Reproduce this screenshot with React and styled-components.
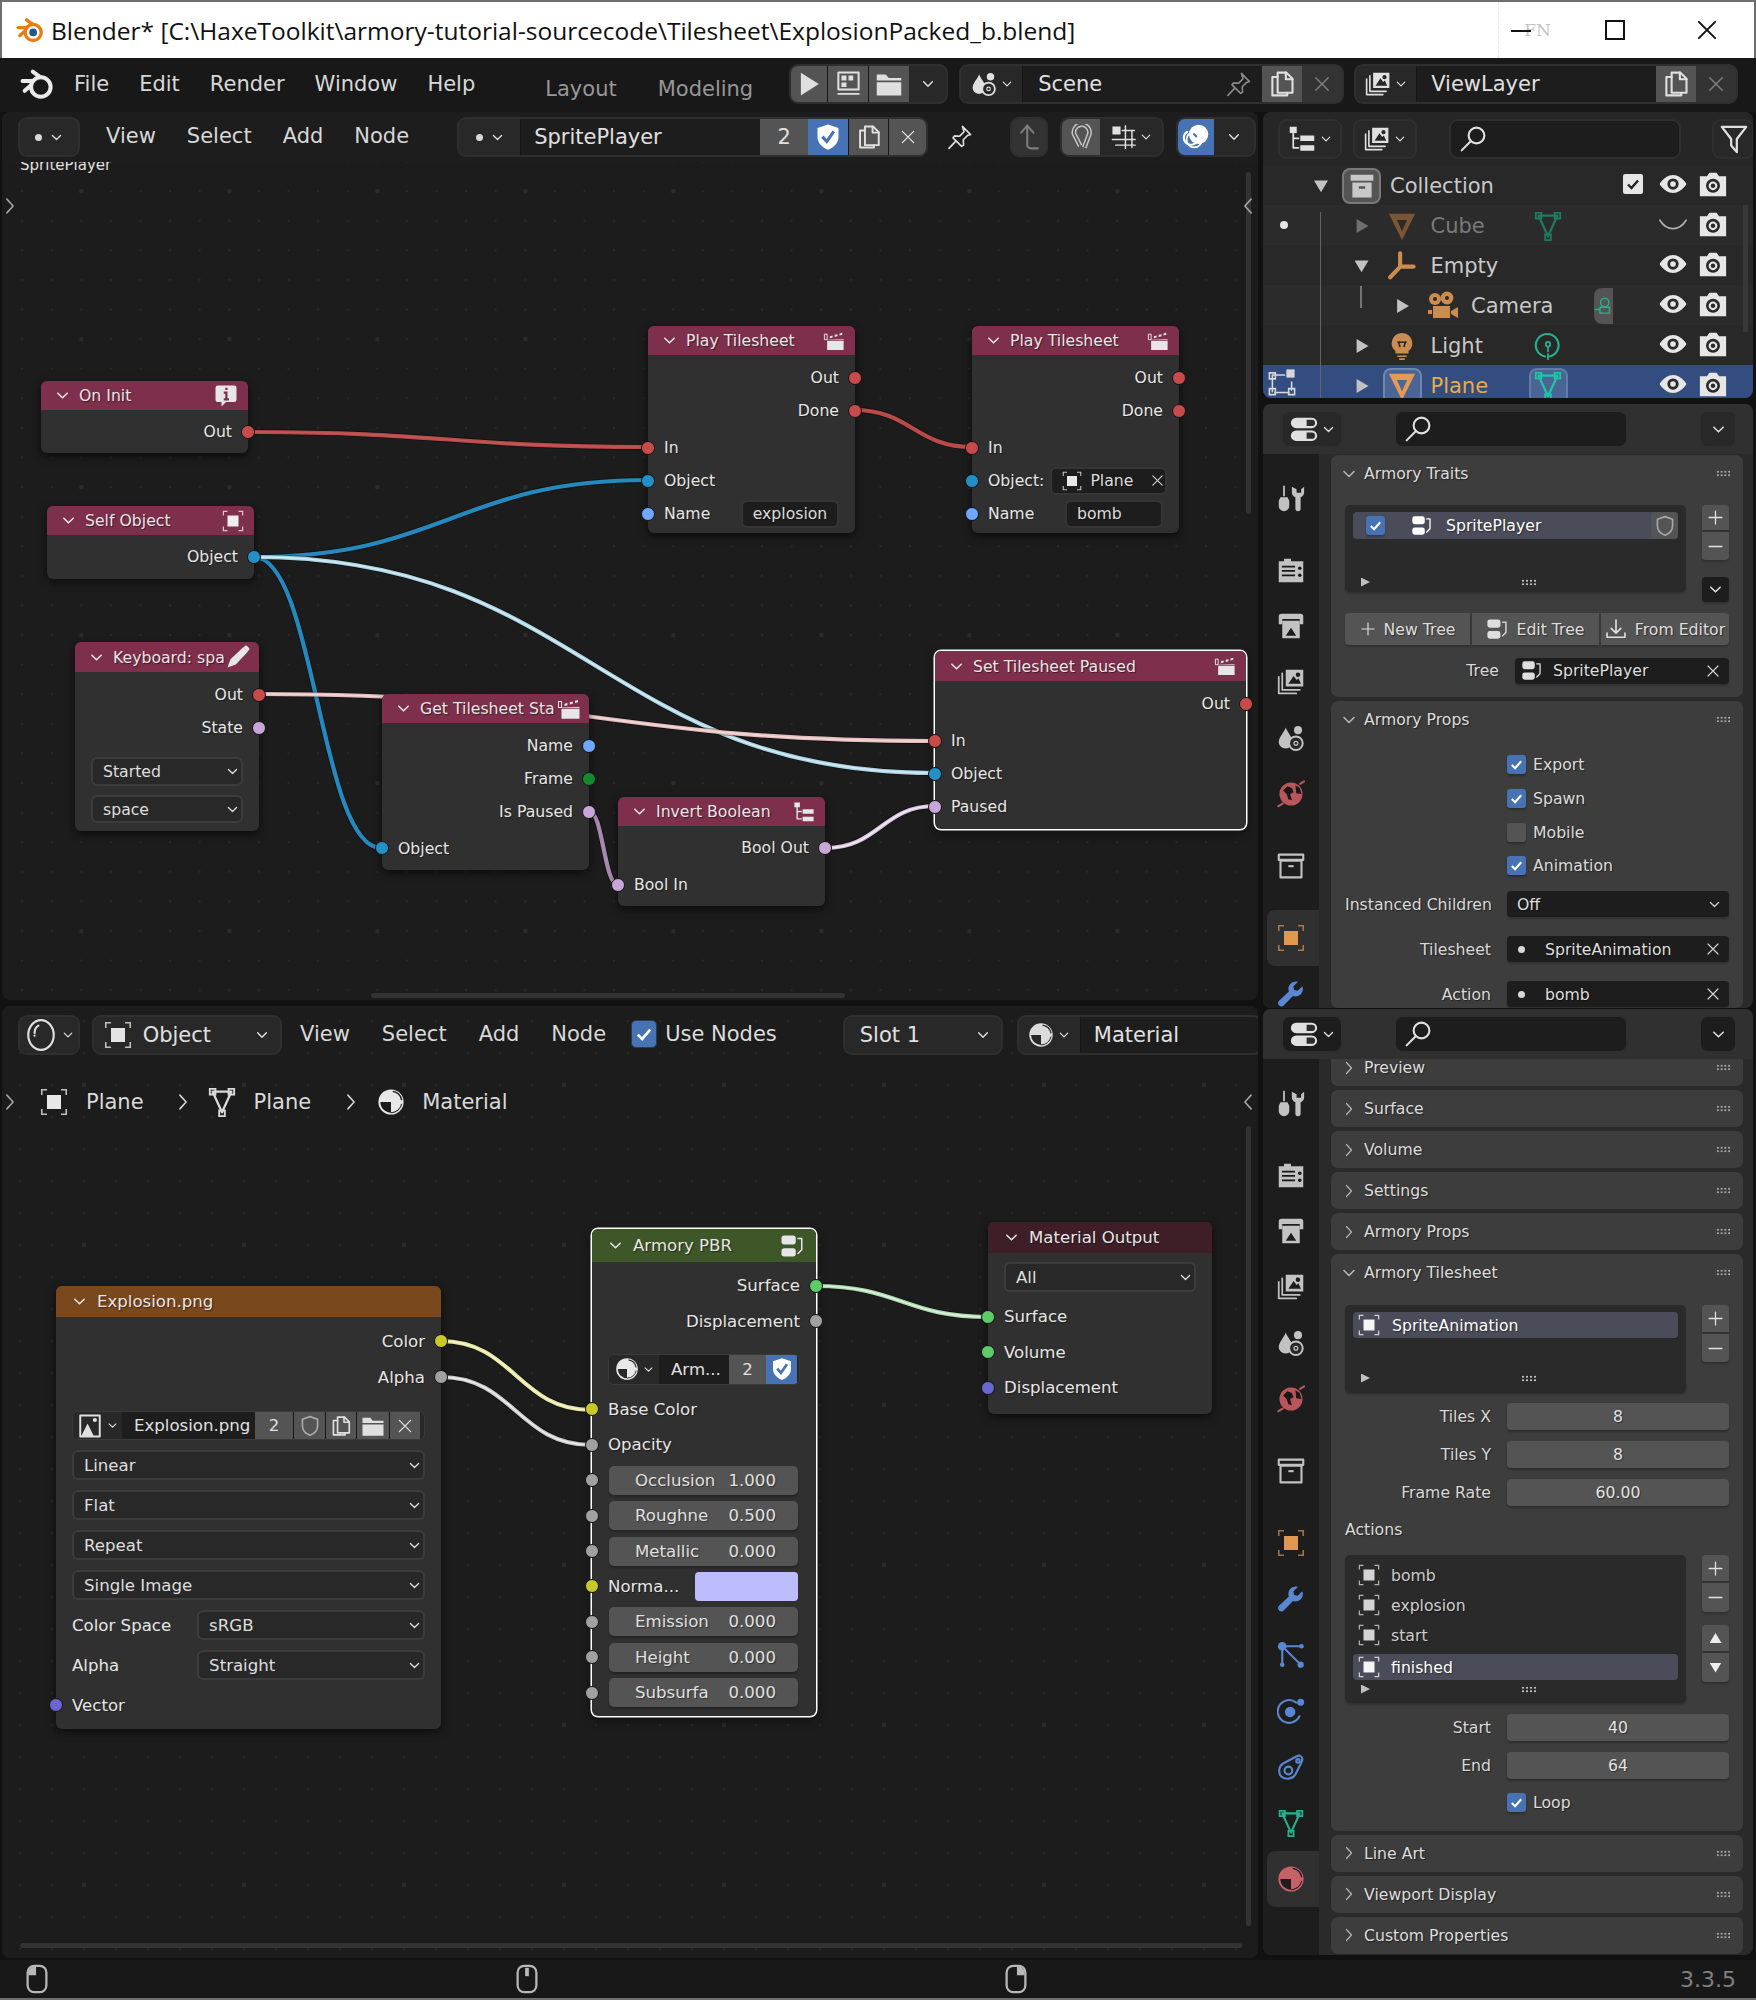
import React from 'react';
import styled, { createGlobalStyle } from 'styled-components';

const GlobalStyle = createGlobalStyle`
  html, body { margin: 0; padding: 0; background: #141414; }
  * { box-sizing: border-box; }
  #root { width: 1756px; height: 2000px; font-family: "DejaVu Sans", "Liberation Sans", sans-serif; }
`;

/* ---------- icons ---------- */

const Svg = ({ s = 20, c = 'currentColor', children, vb = 16, op }) => (
  <svg width={s} height={s} viewBox={`0 0 ${vb} ${vb}`} fill={c} stroke="none" color={c} opacity={op}>
    {children}
  </svg>
);
const line = { fill: 'none', stroke: 'currentColor', strokeWidth: 1.2, strokeLinecap: 'round', strokeLinejoin: 'round' };

const BlenderLogo = ({ s, c = '#e87d0d', eye = '#265787', ring = '#fff' }) => (
  <svg width={s} height={s} viewBox="0 0 16 16">
    <path d="M1.2 6.6h6M2.2 11.2l5-4.4M6 2.2l4.2 3" fill="none" stroke={c} strokeWidth="1.9" strokeLinecap="round" />
    <circle cx="9.8" cy="9.4" r="4.6" fill={ring} stroke={c} strokeWidth="1.9" />
    <circle cx="9.8" cy="9.4" r="2.2" fill={eye} />
  </svg>
);
const Play = p => <Svg {...p}><path d="M3 1l11 7-11 7z" /></Svg>;
const Screen = p => (
  <Svg {...p}>
    <path d="M2 1.5h12v10H2z" {...line} />
    <path d="M3.8 3.2h3v3h-3zM8 3.2h2.8v3H8zM3.8 7.4h3v2.6h-3z" />
    <path d="M1.5 13.6h13v1h-13z" />
  </Svg>
);
const Folder = p => <Svg {...p}><path d="M1 2.5h5.2L7.8 4.5H15V6H1zM1 7h14v7.5H1z" /></Svg>;
const Chevron = ({ s = 14, c }) => <Svg s={s} c={c}><path d="M3 5.5l5 5 5-5" {...line} strokeWidth="1.6" /></Svg>;
const ChevronR = ({ s = 14, c }) => <Svg s={s} c={c}><path d="M5.5 2.5l5 5.5-5 5.5" {...line} /></Svg>;
const ChevronL = ({ s = 14, c }) => <Svg s={s} c={c}><path d="M10.5 2.5l-5 5.5 5 5.5" {...line} /></Svg>;
const SceneIc = p => (
  <Svg {...p}>
    <path d="M5 2c1 3 4 5.500 4 8.300 0 2-1.700 3.700-4 3.700s-4-1.700-4-3.700C1 7.500 4 5 5 2z" />
    <circle cx="12" cy="3.500" r="2.300" />
    <circle cx="10.800" cy="11" r="3.900" fill="#282828" stroke="currentColor" strokeWidth="1.100" />
    <circle cx="10.800" cy="11" r="1.100" fill="none" stroke="currentColor" strokeWidth=".7" />
  </Svg>
);
const ViewLayerIc = p => (
  <Svg {...p}>
    <path d="M5 1h10v9.500H5zM6.500 9l3-4.500 1.700 2.300 1-1 1.500 3.200zM12 2.500a1.300 1.300 0 100 2.600 1.300 1.300 0 000-2.600z" fillRule="evenodd" />
    <path d="M3 3v9.500h10M1 5v9.500h10" {...line} strokeWidth="1" />
  </Svg>
);
const Copy = p => (
  <Svg {...p}>
    <path d="M5.500 1.500h5L14 5v8H5.500z" {...line} />
    <path d="M10.200 1.500V5.300H14" {...line} />
    <path d="M5.500 4H2.500v10.500h8.500V13" {...line} />
  </Svg>
);
const Close = p => <Svg {...p}><path d="M3 3l10 10M13 3L3 13" {...line} /></Svg>;
const Pin = p => (
  <Svg {...p}>
    <path d="M9.500 1.500l5 5-1.800.5-2.700 2.700.2 3.300-1.200.8-5.300-5.300.9-1.200 3.200.2 2.700-2.700zM5 11l-3.800 4" {...line} strokeWidth="1" />
  </Svg>
);
const Shield = ({ s, c = '#ddd', check, op }) => (
  <Svg s={s} c={c} op={op}>
    {check ? (
      <>
        <path d="M8 .8l6 2V8c0 3.800-3.300 6.300-6 7.300C5.300 14.300 2 11.800 2 8V2.800z" />
        <path d="M4.800 7.800L7.300 10.600 11.300 4.800" fill="none" stroke="#4772b3" strokeWidth="1.800" />
      </>
    ) : (
      <path d="M8 1.200l5.500 1.900V8c0 3.500-3 5.800-5.500 6.800C5.500 13.800 2.500 11.500 2.500 8V3.100z" {...line} />
    )}
  </Svg>
);
const Parent = p => <Svg {...p}><path d="M3.500 5.500L7 1.500l3.500 4M7 1.500V12.500a2 2 0 002 2h4" {...line} /></Svg>;
const Magnet = p => (
  <Svg {...p}>
    <path d="M10 14.500l2.600-7A4.800 4.800 0 103.700 6l3.800 7.500" fill="none" stroke="currentColor" strokeWidth="3" />
    <path d="M10 14.500l2.600-7A4.800 4.800 0 103.700 6l3.800 7.500" fill="none" stroke="#545454" strokeWidth="1.100" />
  </Svg>
);
const SnapGrid = p => (
  <Svg {...p}>
    <path d="M1.500 1.500h5v5h-5z" />
    <path d="M9.500 1v14M1.500 9.500h14M13.500 4.500v10M3.500 13h12M7.500 4h7.500" {...line} strokeWidth=".9" />
  </Svg>
);
const Overlay = p => (
  <Svg {...p}>
    <circle cx="9.500" cy="6.500" r="5.500" />
    <path d="M9 9a4 4 0 11-6-4" {...line} strokeWidth="1.200" />
    <path d="M6.500 6l2 2" stroke="#4772b3" strokeWidth="1.200" />
    <circle cx="7" cy="9.500" r="4.400" fill="none" stroke="currentColor" strokeWidth="1" />
  </Svg>
);
const TreeIc = p => (
  <Svg {...p}>
    <path d="M1 1h4v3.500H1zM7 6h8v3.200H7zM7 11.500h8v3.200H7z" />
    <path d="M3 4.500v8.500h3M3 7.600h3" {...line} strokeWidth="1" />
  </Svg>
);
const Funnel = p => <Svg {...p}><path d="M1.500 1.500h13l-5 6.500v7l-3-3.500V8z" {...line} /></Svg>;
const Search = p => (
  <Svg {...p}>
    <circle cx="10" cy="6" r="4.500" {...line} />
    <path d="M6.700 9.300L1.500 14.500" {...line} />
  </Svg>
);
const PropsIc = p => (
  <Svg {...p}>
    <path d="M3.500 1.500h9a3 3 0 010 6h-9a3 3 0 010-6zM3.500 8.800h9a3 3 0 010 6h-9a3 3 0 010-6z" />
    <path d="M9.500 2.700h3a1.800 1.800 0 010 3.600h-3zM9.500 10h3a1.800 1.800 0 010 3.600h-3z" fill="#2c2c2c" />
  </Svg>
);
const Tool = p => (
  <Svg {...p}>
    <path d="M3.500 1h1v6h-1zM1 9.500l1-2h4l1 2v3a2.500 2.500 0 01-6 0z" />
    <path d="M8.500 1.500v3.200A3.200 3.200 0 0010.500 7.600V14a1.500 1.500 0 003 0V7.600a3.200 3.200 0 002-2.900V1.500L13.800 3v2h-2.600V3z" />
  </Svg>
);
const RenderIc = p => (
  <Svg {...p}>
    <path d="M4 1.500h4v1.500h7v12H1V3h3z" />
    <path d="M2.800 5.500h7.500v1H2.800zM2.800 8h7.500v1H2.800zM2.800 10.500h7.500v1H2.800z" fill="#181818" />
    <circle cx="13" cy="7" r="1" fill="#181818" />
    <circle cx="13" cy="11" r="1" fill="#181818" />
  </Svg>
);
const OutputIc = p => (
  <Svg {...p}>
    <path d="M2.500 1h11A1.500 1.500 0 0115 2.500V7h-2V4H3v3H1V2.500A1.500 1.500 0 012.500 1z" />
    <path d="M3 5h10v10H3zM5 13.500h6L8 9z" fillRule="evenodd" />
  </Svg>
);
const World = p => (
  <Svg {...p}>
    <circle cx="8" cy="8" r="6.600" />
    <path d="M3.500 6l2.500-2.500 2.500 1 1 2.500-2 1 1 3.500-2-.5-1-3zM10.500 3l2.500 1.500 1 3.500-3-.5z" fill="#181818" />
    <path d="M13.200 2.200L15.500 .8M.8 15l2.400-1.500" {...line} />
  </Svg>
);
const CollectionIc = p => (
  <Svg {...p}>
    <path d="M1 1.500h14v3H1zM2 5h12v9.500H2z" {...line} />
    <path d="M6.500 7.500h3v1.200h-3z" />
  </Svg>
);
const CollectionSolid = p => (
  <Svg {...p}>
    <path d="M1.500 1.500h13v3.500h-13zM2.500 6h11v8.500h-11zM6.200 8.200v1.300h3.600V8.200z" fillRule="evenodd" />
  </Svg>
);
const ObjectIc = ({ s, c, inner, corner }) => (
  <Svg s={s} c={c}>
    <path d="M1 4V1h3M12 1h3v3M15 12v3h-3M4 15H1v-3" fill="none" stroke={corner || c || 'currentColor'} strokeWidth=".9" opacity=".8" />
    <path d="M4 4h8v8H4z" fill={inner || c || 'currentColor'} />
  </Svg>
);
const Wrench = p => (
  <Svg {...p}>
    <path d="M14.500 3.500L11.800 6.200 9.800 5.700 9.300 3.700 12 1C9.300.3 6.700 2 6.500 4.800c0 .7.100 1.300.3 1.800L1.300 11.700c-1 1-.9 2-.1 2.800.8.800 1.900.8 2.800-.1l5.100-5.200c3.300 1 6.800-2.200 5.400-5.700z" />
  </Svg>
);
const Particles = p => (
  <Svg {...p}>
    <circle cx="3" cy="3" r="2.500" />
    <circle cx="14" cy="3" r="1.300" />
    <circle cx="13.500" cy="13.500" r="1.800" />
    <circle cx="3" cy="13.500" r="1.300" />
    <path d="M5 3h8M3 5v7M5 5l7.500 7.500" {...line} />
  </Svg>
);
const Physics = p => (
  <Svg {...p}>
    <circle cx="7.500" cy="8.500" r="3" />
    <circle cx="13.500" cy="3" r="2" />
    <path d="M11 3.200A6.500 6.500 0 1012.800 11" {...line} />
  </Svg>
);
const Constraint = p => (
  <Svg {...p}>
    <path d="M13 1.500c1.500.5 1.800 2.200 1 3.800l-3.500 7C9 15 5 15.500 2.500 13.500.5 11.500 1 7.500 3.500 6L11 2c.8-.4 1.400-.6 2-.5z" {...line} />
    <circle cx="6.500" cy="10" r="2.200" {...line} />
    <circle cx="12" cy="4.500" r="1" {...line} />
  </Svg>
);
const Mesh = ({ s, c, op }) => (
  <Svg s={s} c={c} op={op}>
    <path d="M3 2.500h10M3 2.500L8 13.500M13 2.500L8 13.500" {...line} />
    <path d="M1.500 1h3v3h-3zM11.500 1h3v3h-3zM6.500 12.500h3v3h-3z" fill="none" stroke="currentColor" strokeWidth="1" />
  </Svg>
);
const MaterialIc = ({ s, c = 'currentColor', dark = '#1d1d1d' }) => (
  <svg width={s} height={s} viewBox="0 0 16 16">
    <circle cx="8" cy="8" r="7.200" fill={c} />
    <path d="M8 8H1.900A6.100 6.100 0 008 14.100z" fill={dark} />
    <path d="M9 1.900A6.200 6.200 0 0114.100 7" fill="none" stroke={dark} strokeWidth=".8" />
    <path d="M8 14.100A6.100 6.100 0 0014.100 9" fill="none" stroke={dark} strokeWidth=".6" />
  </svg>
);
const SphereIc = ({ s }) => (
  <Svg s={s}>
    <ellipse cx="8" cy="8" rx="6" ry="7" {...line} strokeWidth="1" />
    <path d="M5 7c0-1.500.6-2.700 1.800-3.400" {...line} strokeWidth="1" />
    <circle cx="5" cy="8.300" r=".5" />
  </Svg>
);
const Clapper = p => (
  <Svg {...p}>
    <path d="M3 8h12v6.500H3z" />
    <path d="M3 7l12-.3v.8H3z" />
    <path d="M1 3h2v4H1z" fill="none" stroke="currentColor" strokeWidth=".7" />
    <path d="M5 4.500l2-.5v1.500l-2 .5zM8.500 3.500l2-.5v1.500l-2 .5zM12 2.500l2-.5v1.500l-2 .5z" />
  </Svg>
);
const Info = p => (
  <Svg {...p}>
    <path d="M2.500 1h11A1.500 1.500 0 0115 2.500v8a1.500 1.500 0 01-1.500 1.500H8l-3 3v-3H2.500A1.500 1.500 0 011 10.500v-8A1.500 1.500 0 012.500 1z" />
    <path d="M6.500 5h2.500v4.500h1V11H6.500V9.500h1v-3h-1zM7.500 2.500h1.500V4H7.500z" fill="#7e2f4c" />
  </Svg>
);
const Pencil = p => <Svg {...p}><path d="M11.500 1.500l3 3L6.500 13 1 15l2-5.500zM12.500 .8a1.200 1.200 0 011.700 0l1 1a1.200 1.200 0 010 1.700l-.8.800-2.800-2.800z" /></Svg>;
const NodeTreeIc = p => (
  <Svg {...p}>
    <rect x="1" y="1" width="9.500" height="6" rx="1.800" />
    <rect x="1" y="9.500" width="9.500" height="5.500" rx="1.800" />
    <path d="M12 3h2.500v7.500L12 13" {...line} strokeWidth="1" />
  </Svg>
);
const ImageIc = p => (
  <Svg {...p}>
    <path d="M2 1.500h12v13H2z" {...line} />
    <path d="M2.500 14.500l4-8 4 8zM11 3a1.300 1.300 0 100 2.600A1.300 1.300 0 0011 3z" />
  </Svg>
);
const Download = p => <Svg {...p}><path d="M8 1.500V10.500M4.500 7.500L8 11l3.500-3.500M1.500 11v3h13v-3" {...line} /></Svg>;
const Plus = p => <Svg {...p}><path d="M8 2v12M2 8h12" {...line} /></Svg>;
const Minus = p => <Svg {...p}><path d="M2 8h12" {...line} /></Svg>;
const Eye = ({ s = 30 }) => (
  <Svg s={s}>
    <path d="M.8 8C3 4.700 5.500 3.200 8 3.200s5 1.500 7.200 4.800C13 11.300 10.500 12.800 8 12.800S3 11.300.8 8z" />
    <circle cx="8" cy="8" r="3" fill="#2a2a2a" />
    <circle cx="8" cy="8" r="1.500" />
  </Svg>
);
const EyeOff = ({ s = 30 }) => <Svg s={s} op=".7"><path d="M1 6c2 3.200 4.500 4.500 7 4.500S13 9.200 15 6" {...line} strokeWidth=".9" /></Svg>;
const CameraEye = ({ s = 28 }) => (
  <Svg s={s}>
    <path d="M.5 3.500h4L6 1.500h4l1.500 2h4V15H.5z" />
    <circle cx="8" cy="9" r="4" fill="#2a2a2a" />
    <circle cx="8" cy="9" r="2.500" />
    <circle cx="8" cy="9" r="1.300" fill="#2a2a2a" />
  </Svg>
);
const Triangle = ({ c, s }) => (
  <Svg s={s} c={c}>
    <path d="M1 1.500h14L8 15.500zM5.300 4.800L8 10.800l2.700-6z" fillRule="evenodd" />
  </Svg>
);
const EmptyIc = ({ c, s }) => (
  <Svg s={s} c={c}>
    <path d="M7 1.200v7.300M7.200 8.300h7M7 8.500l-5.300 5.500" fill="none" stroke="currentColor" strokeWidth="2.200" strokeLinecap="round" />
  </Svg>
);
const CameraObj = ({ c, s }) => (
  <Svg s={s} c={c}>
    <circle cx="4" cy="4.500" r="3" />
    <circle cx="10" cy="4" r="3.200" />
    <circle cx="4" cy="4.500" r="1" fill="#2a2a2a" />
    <circle cx="10" cy="4" r="1" fill="#2a2a2a" />
    <path d="M3 8h8.500v6H3zM12 10.500l3.500-2v5.500l-3.500-2zM.5 10h2v2h-2z" />
  </Svg>
);
const Bulb = ({ c, s }) => (
  <Svg s={s} c={c}>
    <path d="M8 1a5.500 5.500 0 013.500 9.700V12h-7v-1.300A5.500 5.500 0 018 1z" />
    <path d="M5.500 13h5v.9h-5zM6.500 14.500h3v.9h-3z" />
    <path d="M6 5.500l1 3M10 5.500l-1 3M5.500 6h5" stroke="#2a2a2a" strokeWidth=".9" fill="none" />
  </Svg>
);
const LightData = ({ c, s }) => (
  <Svg s={s} c={c}>
    <path d="M6.300 14A6.500 6.500 0 118.800 14" {...line} />
    <circle cx="8" cy="7" r="1.300" {...line} strokeWidth="1" />
    <path d="M8 8.500v2.500M8 12.500v3" {...line} strokeWidth="1" />
  </Svg>
);
const CamData = ({ c, s }) => (
  <Svg s={s} c={c}>
    <circle cx="9" cy="5" r="3.500" {...line} />
    <path d="M5 9h8v5H5zM1 11h4" {...line} />
  </Svg>
);
const ModeIc = ({ s }) => (
  <Svg s={s}>
    <path d="M2.500 4.500v9M2.500 4h7M4 14h8M13.500 8v4.500" {...line} strokeWidth=".9" />
    <path d="M.8 2.800h3.400v3.400H.8zM.8 11.800h3.400v3.400H.8zM11.800 11.800h3.400v3.400h-3.400z" fill="none" stroke="currentColor" strokeWidth=".9" />
    <path d="M10.500 .8h4.700v4.700h-4.700z" />
  </Svg>
);
const MouseIc = ({ s, side }) => (
  <Svg s={s}>
    <rect x="3" y="1" width="10" height="14" rx="3.500" {...line} />
    {side === 'l' && <path d="M3.500 4.500a3 3 0 013-3h1V6H3.500z" />}
    {side === 'm' && <rect x="7" y="2" width="2" height="4.500" />}
    {side === 'r' && <path d="M12.500 4.500a3 3 0 00-3-3h-1V6h4z" />}
  </Svg>
);
const Check = ({ s = 16 }) => <Svg s={s} c="#fff"><path d="M3 8.500L6.500 12 13 4.500" fill="none" stroke="#fff" strokeWidth="2.200" /></Svg>;

/* ---------- window frame ---------- */

const Window = styled.div`
  width: 1756px;
  height: 2000px;
  display: flex;
  flex-direction: column;
  background: #111;
  overflow: hidden;
  position: relative;
`;

const TitleBar = styled.div`
  height: 58px;
  flex: none;
  background: #fff;
  border-top: 2px solid #6f6f6f;
  border-left: 2px solid #6f6f6f;
  border-right: 2px solid #6f6f6f;
  display: flex;
  align-items: center;
  padding-left: 14px;
  gap: 7px;
  color: #111;
  font-family: "Open Sans", "Liberation Sans", sans-serif;
  font-size: 24.500px;
  white-space: nowrap;
`;

const ImeBadge = styled.div`
  margin-left: auto;
  width: 100px;
  height: 56px;
  padding-right: 22px;
  color: #c4c4c4;
  font-family: "DejaVu Serif", serif;
  font-size: 17px;
  display: flex;
  align-items: center;
  justify-content: center;
  border-left: 1px dashed #e8e8e8;
  position: relative;
`;

const WinMin = styled.span`
  position: absolute;
  left: 12px;
  top: 28px;
  width: 20px;
  height: 2px;
  background: #111;
`;

const WinMax = styled.span`
  width: 20px;
  height: 20px;
  border: 2px solid #111;
`;

const WinClose = styled.span`
  margin-left: 62px;
  margin-right: 34px;
  display: flex;
  color: #111;
`;

const TopBar = styled.div`
  height: 54px;
  flex: none;
  background: #181818;
  display: flex;
  align-items: center;
  padding-bottom: 3px;
  color: #dcdcdc;
`;

const LogoBox = styled.span`
  margin-left: 20px;
  display: flex;
`;

const Menus = styled.div`
  display: flex;
  flex: none;
  gap: ${p => p.$gap || 30}px;
  margin-left: ${p => p.$ml || 0}px;
  font-size: 21px;
  line-height: 38px;
  color: ${p => p.$c || '#d8d8d8'};
  white-space: nowrap;
`;

const Workspaces = styled.div`
  display: flex;
  gap: 41px;
  margin-left: 70px;
  padding-top: 10px;
  font-size: 21px;
  color: #979797;
`;

const Group = styled.div`
  display: flex;
  align-items: stretch;
  height: ${p => p.$h || 40}px;
  margin-left: ${p => p.$ml || 0}px;
  border: 2px solid #2f2f2f;
  border-radius: 9px;
  overflow: hidden;
  flex: none;
  background: #282828;
`;

const tones = {
  icon: '#282828',
  dark: '#1d1d1d',
  mid: '#545454',
  blue: '#4772b3',
  dim: '#333333',
  none: 'transparent',
};

const Btn = styled.div`
  width: ${p => p.$w}px;
  flex: none;
  background: ${p => tones[p.$tone || 'icon']};
  color: ${p => p.$c || '#e0e0e0'};
  display: flex;
  align-items: center;
  justify-content: ${p => (p.$left ? 'flex-start' : 'center')};
  gap: 4px;
  padding-left: ${p => p.$left || 0}px;
  font-size: ${p => p.$fs || 21}px;
  border-left: ${p => (p.$sep ? '1px solid #161616' : 'none')};
  white-space: nowrap;
  overflow: hidden;
`;

const PinSlot = styled.div`
  width: 48px;
  height: 40px;
  flex: none;
  margin-left: 8px;
  display: flex;
  align-items: center;
  justify-content: center;
  color: #e0e0e0;
`;

const Filler = styled.span`
  flex: 1;
`;

const Dot = styled.span`
  width: 7px;
  height: 7px;
  border-radius: 50%;
  background: #d8d8d8;
  margin-right: 4px;
  flex: none;
`;

const Main = styled.div`
  flex: 1;
  display: grid;
  grid-template-columns: 1256px 490px;
  column-gap: 5px;
  padding-left: 2px;
  min-height: 0;
`;

const Column = styled.div`
  display: flex;
  flex-direction: column;
  min-height: 0;
`;

/* ---------- node editor ---------- */

const Editor = styled.div`
  height: ${p => p.$h}px;
  margin-top: ${p => p.$mt || 0}px;
  flex: none;
  position: relative;
  overflow: hidden;
  border-radius: 8px;
  background-color: #1c1c1c;
  background-image:
    radial-gradient(circle, #2c2c2c 2px, transparent 2.500px),
    radial-gradient(circle, #282828 1px, transparent 1.500px);
  background-size: ${p => p.$grid * 5}px ${p => p.$grid * 5}px, ${p => p.$grid}px ${p => p.$grid}px;
  background-position: ${p => p.$gx}px ${p => p.$gy}px, ${p => p.$gx}px ${p => p.$gy}px;
`;

const Canvas = styled.div`
  position: absolute;
  left: ${p => -p.$ox}px;
  top: ${p => -p.$oy}px;
  width: 1756px;
  height: 2000px;
`;

const LinkLayer = styled.svg`
  position: absolute;
  left: 0;
  top: 0;
  width: 1756px;
  height: 2000px;
`;

const EditorHeader = styled.div`
  position: relative;
  z-index: 2;
  height: ${p => p.$h}px;
  background: ${p => p.$bg || '#1d1d1d'};
  display: flex;
  align-items: flex-start;
  padding-top: ${p => p.$pt}px;
  padding-left: 16px;
`;

const HeaderLabel = styled.span`
  flex: none;
  font-size: 21px;
  color: #dcdcdc;
  margin-left: 8px;
  line-height: 38px;
  white-space: nowrap;
`;

const BigCheck = styled.span`
  width: 26px;
  height: 28px;
  flex: none;
  margin-left: ${p => p.$ml}px;
  margin-top: 5px;
  border-radius: 5px;
  background: #4772b3;
  border: 1px solid #2f3b52;
  display: flex;
  align-items: center;
  justify-content: center;
`;

const Crumbs = styled.div`
  position: relative;
  z-index: 1;
  margin-top: 20px;
  height: 44px;
  padding-left: 38px;
  display: flex;
  align-items: center;
  font-size: 21px;
  color: #dadada;
`;

const CrumbIcon = styled.span`
  display: flex;
  margin-left: ${p => p.$ml || 0}px;
`;

const CrumbText = styled.span`
  margin-left: ${p => p.$ml || 17}px;
`;

const StrayLabel = styled.div`
  position: absolute;
  left: 20px;
  top: 156px;
  font-size: 15px;
  color: #e0e0e0;
`;

const RegionToggle = styled.span`
  position: absolute;
  z-index: 4;
  top: ${p => p.$top}px;
  ${p => (p.$right ? 'right: 0;' : 'left: -2px;')}
  color: #a8a8a8;
  display: flex;
`;

const Scroller = styled.span`
  position: absolute;
  z-index: 3;
  left: ${p => p.$x}px;
  top: ${p => p.$y}px;
  width: ${p => p.$w}px;
  height: ${p => p.$h}px;
  border-radius: 3px;
  background: #333;
`;

const Node = styled.div`
  position: absolute;
  left: ${p => p.$x}px;
  top: ${p => p.$y}px;
  width: ${p => p.$w}px;
  background: #303030;
  border-radius: 6px;
  color: #e6e6e6;
  font-size: ${p => p.$fs || 15.700}px;
  box-shadow: ${p => (p.$sel ? '0 0 0 1.500px #fff, 0 4px 10px rgba(0,0,0,.5)' : '0 3px 9px rgba(0,0,0,.6)')};
  padding-bottom: ${p => p.$pb || 0}px;
`;

const NodeHead = styled.div`
  height: ${p => p.$h || 29}px;
  background: ${p => p.$bg || '#7e2f4c'};
  border-radius: 6px 6px 0 0;
  display: flex;
  align-items: center;
  padding-left: ${p => p.$pl || 14}px;
  gap: ${p => p.$gap || 9}px;
  margin-bottom: ${p => p.$mb || 0}px;
  white-space: nowrap;
  text-shadow: 1px 1px 1px rgba(0, 0, 0, 0.5);
  overflow: hidden;
`;

const HeadTitle = styled.span`
  flex: 1;
  min-width: 0;
`;

const HeadIcon = styled.span`
  display: flex;
  margin-right: ${p => (p.$mr !== undefined ? p.$mr : 10)}px;
  flex: none;
`;

const NodeRow = styled.div`
  position: relative;
  height: ${p => p.$h || 33}px;
  margin-top: ${p => p.$mt || 0}px;
  display: flex;
  align-items: center;
  justify-content: ${p => (p.$end ? 'flex-end' : 'flex-start')};
  padding: 0 16px;
  gap: 6px;
  white-space: nowrap;
  text-shadow: 1px 1px 1px rgba(0, 0, 0, 0.4);
`;

const Socket = styled.span`
  position: absolute;
  top: 50%;
  ${p => (p.$out ? 'right: -7px;' : 'left: -7px;')}
  width: 14px;
  height: 14px;
  margin-top: -7px;
  border-radius: 50%;
  background: ${p => p.$c};
  border: 1px solid #141414;
  z-index: 1;
`;

const NodeField = styled.span`
  margin-left: auto;
  width: ${p => p.$w}px;
  height: 28px;
  flex: none;
  background: #1d1d1d;
  border: 2px solid #363636;
  border-radius: 6px;
  display: flex;
  align-items: center;
  justify-content: ${p => (p.$center ? 'center' : 'flex-start')};
  padding-left: ${p => (p.$center ? 0 : 10)}px;
  gap: 8px;
  color: #dcdcdc;
`;

const NodeSelect = styled.div`
  height: ${p => p.$h || 30}px;
  margin: ${p => p.$mt || 0}px 16px 0 ${p => p.$ml || 16}px;
  background: #282828;
  border: 2px solid #3c3c3c;
  border-radius: 6px;
  display: flex;
  align-items: center;
  justify-content: space-between;
  padding: 0 2px 0 10px;
  color: #dedede;
  white-space: nowrap;
`;

const LabeledSelect = styled.div`
  margin-top: ${p => p.$mt || 10}px;
  display: grid;
  grid-template-columns: 125px 1fr;
  align-items: center;
  padding-left: 16px;
`;

const NodeId = styled.div`
  height: ${p => p.$h || 30}px;
  margin: ${p => p.$mt || 0}px 16px 0;
  border-radius: 6px;
  display: flex;
  overflow: hidden;
  border: 1px solid #3a3a3a;
  background: #282828;
`;

const NodeSlider = styled.div`
  width: 189px;
  height: 29px;
  background: #545454;
  border-radius: 5px;
  display: flex;
  align-items: center;
  justify-content: space-between;
  padding: 0 22px 0 26px;
  margin-left: 1px;
  color: #e0e0e0;
  white-space: nowrap;
  box-shadow: 0 2px 2px rgba(0, 0, 0, 0.25);
`;

const Swatch = styled.span`
  margin-left: auto;
  margin-right: 2px;
  width: 103px;
  height: 29px;
  background: #bcbcff;
  border-radius: 4px;
`;

/* ---------- right column ---------- */

const Outliner = styled.div`
  height: 286px;
  flex: none;
  background: #282828;
  border-radius: 8px;
  overflow: hidden;
  position: relative;
`;

const OutlinerHeader = styled.div`
  height: 53px;
  background: #262626;
  display: flex;
  align-items: center;
  padding-left: 15px;
`;

const OutRow = styled.div`
  height: 40px;
  display: flex;
  align-items: center;
  padding-left: ${p => 51 + p.$d * 40.500}px;
  padding-top: 2px;
  background: ${p => (p.$sel ? '#334d80' : p.$alt ? '#2b2b2b' : '#282828')};
  font-size: 21px;
  color: ${p => p.$c || '#c8c8c8'};
  white-space: nowrap;
`;

const OutArrow = styled.span`
  width: 14px;
  height: 14px;
  flex: none;
  background: ${p => p.$c || '#c2c2c2'};
  clip-path: ${p => (p.$open ? 'polygon(0 10%, 100% 10%, 50% 95%)' : 'polygon(15% 0, 100% 50%, 15% 100%)')};
`;

const OutIcon = styled.span`
  width: 39px;
  height: 36px;
  margin-left: 14px;
  flex: none;
  display: flex;
  align-items: center;
  justify-content: center;
  border-radius: 8px;
  ${p => p.$box && `background: ${p.$box}; border: 2px solid rgba(255,255,255,.22);`}
`;

const OutName = styled.span`
  margin-left: 9px;
  width: ${p => p.$w}px;
  flex: none;
`;

const DataCell = styled.span`
  width: ${p => p.$w || 39}px;
  height: 36px;
  flex: none;
  display: flex;
  justify-content: ${p => (p.$w ? 'flex-start' : 'center')};
  align-items: center;
  overflow: hidden;
  border-radius: ${p => (p.$w ? '8px 0 0 8px' : '8px')};
  ${p => p.$box && `background: ${p.$box};${p.$w ? '' : ' border: 2px solid rgba(255,255,255,.15);'}`}
`;

const RowEnd = styled.span`
  margin-left: auto;
  margin-right: 20px;
  margin-bottom: 5px;
  display: flex;
  align-items: center;
`;

const EndCell = styled.span`
  width: 40px;
  display: flex;
  justify-content: center;
  color: #e6e6e6;
`;

const TinyCheck = styled.span`
  width: 20px;
  height: 20px;
  border-radius: 2px;
  background: #e6e6e6;
  display: flex;
  align-items: center;
  justify-content: center;
`;

const OutMark = styled.span`
  position: absolute;
  left: ${p => p.$x}px;
  top: ${p => p.$y}px;
  ${p => p.$w && `width: ${p.$w}px;`}
  ${p => p.$h && `height: ${p.$h}px;`}
  ${p => p.$bg && `background: ${p.$bg};`}
  ${p => p.$r && 'border-radius: 50%;'}
  color: #d8d8d8;
  display: flex;
`;

const PropsArea = styled.div`
  height: ${p => p.$h}px;
  margin-top: ${p => p.$mt}px;
  flex: none;
  background: #2a2a2a;
  border-radius: 8px;
  overflow: hidden;
  display: flex;
  flex-direction: column;
  color: #d8d8d8;
  font-size: 15.700px;
  text-shadow: 1px 1px 1px rgba(0, 0, 0, 0.45);
`;

const PropsHeader = styled.div`
  height: ${p => p.$h || 50}px;
  flex: none;
  background: #303030;
  display: flex;
  align-items: center;
  padding-left: 18px;
  color: #e0e0e0;
`;

const PropsBody = styled.div`
  flex: 1;
  display: flex;
  min-height: 0;
`;

const NavBar = styled.div`
  width: 56px;
  flex: none;
  background: #1d1d1d;
  display: flex;
  flex-direction: column;
  gap: 16px;
  padding-top: 16px;
  overflow: hidden;
`;

const NavGroup = styled.div`
  display: flex;
  flex-direction: column;
  flex: none;
`;

const NavItem = styled.div`
  height: 56px;
  flex: none;
  margin-left: 4px;
  border-radius: 8px 0 0 8px;
  background: ${p => (p.$active ? '#303030' : 'transparent')};
  display: flex;
  align-items: center;
  justify-content: center;
  padding-right: 4px;
  color: ${p => p.$c || '#c2c2c2'};
`;

const PanelList = styled.div`
  flex: 1;
  padding: 1px 10px 0 12px;
  display: flex;
  flex-direction: column;
  gap: 4px;
  min-width: 0;
  overflow: hidden;
  position: relative;
`;

const Panel = styled.div`
  flex: none;
  margin-top: ${p => p.$mt || 0}px;
  background: #3d3d3d;
  border-radius: 7px;
  padding: 0 14px ${p => p.$pb || 0}px;
`;

const PanelHead = styled.div`
  height: 37px;
  display: flex;
  align-items: center;
  gap: 7px;
  color: #dcdcdc;
`;

const PanelChevron = styled.span`
  display: flex;
  width: 16px;
  margin-left: -4px;
  color: #b5b5b5;
`;

const Grip = styled.span`
  margin-left: auto;
  margin-right: -2px;
  width: 15px;
  height: 7px;
  background-image: radial-gradient(circle, #a8a8a8 .9px, transparent 1.100px);
  background-size: 3.750px 3.500px;
`;

const ListGrid = styled.div`
  display: grid;
  grid-template-columns: 341px 27px;
  column-gap: 16px;
  margin-top: ${p => p.$mt || 0}px;
`;

const ListBox = styled.div`
  height: ${p => p.$h}px;
  background: #2a2a2a;
  border-radius: 5px;
  padding: ${p => p.$pt || 7}px 8px 0;
  position: relative;
  box-shadow: 0 2px 2px rgba(0, 0, 0, 0.2);
`;

const ListItem = styled.div`
  height: ${p => p.$h || 26}px;
  margin-top: ${p => p.$mt || 0}px;
  display: flex;
  align-items: center;
  gap: ${p => p.$gap || 11}px;
  padding-left: ${p => p.$pl || 5}px;
  border-radius: 4px;
  background: ${p => (p.$active ? '#4a4c59' : 'transparent')};
  color: ${p => (p.$active ? '#ffffff' : '#cdcdcd')};
`;

const ShieldBtn = styled.span`
  margin-left: auto;
  width: 27px;
  height: 27px;
  border-radius: 4px;
  background: #545454;
  display: flex;
  align-items: center;
  justify-content: center;
`;

const ListFoot = styled.div`
  position: absolute;
  left: 16px;
  right: 0;
  bottom: ${p => p.$b}px;
  height: 10px;
  display: flex;
  align-items: center;
`;

const FootArrow = styled.span`
  width: 9px;
  height: 9px;
  background: #c0c0c0;
  clip-path: polygon(0 0, 100% 50%, 0 100%);
`;

const FootGrip = styled.span`
  position: absolute;
  left: 160px;
  width: 16px;
  height: 7px;
  background-image: radial-gradient(circle, #c0c0c0 .8px, transparent 1px);
  background-size: 4px 3.500px;
`;

const SideButtons = styled.div`
  display: flex;
  flex-direction: column;
`;

const SideBtn = styled.div`
  height: ${p => p.$h || 27}px;
  margin-top: ${p => p.$mt || 0}px;
  background: ${p => (p.$dark ? '#1d1d1d' : '#545454')};
  border-radius: ${p => p.$r || '4px'};
  display: flex;
  align-items: center;
  justify-content: center;
  color: #e2e2e2;
  box-shadow: 0 2px 2px rgba(0, 0, 0, 0.2);
`;

const ArrowUp = styled.span`
  width: 12px;
  height: 10px;
  background: #eee;
  clip-path: ${p => (p.$down ? 'polygon(0 0, 100% 0, 50% 100%)' : 'polygon(50% 0, 100% 100%, 0 100%)')};
`;

const ActionRow = styled.div`
  display: grid;
  grid-template-columns: 125px 127px 128px;
  column-gap: 2px;
  margin-top: 11px;
`;

const ActionBtn = styled.div`
  height: 32px;
  background: #545454;
  display: flex;
  align-items: center;
  justify-content: center;
  gap: 8px;
  color: #dedede;
  white-space: nowrap;
  border-radius: ${p => p.$r || '0'};
  box-shadow: 0 2px 2px rgba(0, 0, 0, 0.2);
`;

const PropRow = styled.div`
  display: grid;
  grid-template-columns: ${p => p.$lw || 146}px 1fr;
  column-gap: 16px;
  align-items: center;
  margin-top: ${p => p.$mt || 0}px;
  min-height: ${p => p.$h || 27}px;
`;

const PropLabel = styled.span`
  text-align: right;
  white-space: nowrap;
`;

const FieldDark = styled.div`
  height: ${p => p.$h || 26}px;
  background: #1d1d1d;
  border-radius: 4px;
  display: flex;
  align-items: center;
  padding: 0 8px 0 ${p => p.$pl || 10}px;
  gap: ${p => p.$gap || 12}px;
  color: #dedede;
  box-shadow: 0 2px 2px rgba(0, 0, 0, 0.2);
`;

const FieldEnd = styled.span`
  margin-left: auto;
  display: flex;
  color: #d0d0d0;
`;

const FieldValue = styled.div`
  height: 27px;
  background: #545454;
  border-radius: 4px;
  display: flex;
  align-items: center;
  justify-content: center;
  color: #e2e2e2;
  box-shadow: 0 2px 2px rgba(0, 0, 0, 0.25);
`;

const CheckBox = styled.span`
  width: 19px;
  height: 19px;
  border-radius: 3px;
  background: ${p => (p.$on ? '#4772b3' : '#545454')};
  display: flex;
  align-items: center;
  justify-content: center;
  flex: none;
  margin-right: ${p => p.$mr || 0}px;
  box-shadow: 0 2px 2px rgba(0, 0, 0, 0.25);
`;

const CheckRow = styled.div`
  height: ${p => p.$h || 33.700}px;
  margin-top: ${p => p.$mt || 0}px;
  margin-left: 162px;
  display: flex;
  align-items: center;
  gap: 7px;
  color: #dcdcdc;
`;

const SectionLabel = styled.div`
  height: 20px;
  margin-top: 14px;
  line-height: 20px;
  color: #dcdcdc;
`;

const StatusBar = styled.div`
  height: 40px;
  flex: none;
  background: #181818;
  border-bottom: 2px solid #6f6f6f;
  display: flex;
  align-items: center;
  padding-left: 22px;
  color: #b8b8b8;
  margin-top: 1px;
`;

const MouseCell = styled.span`
  width: 489.500px;
  flex: none;
  display: flex;
`;

const Version = styled.span`
  margin-left: auto;
  margin-right: 20px;
  font-size: 22px;
  color: #808080;
`;

/* ---------- data ---------- */

const RED = '#c74b4b';
const BLUE = '#2490c8';
const LBLUE = '#6fa8ff';
const PINK = '#c9a6d8';
const GREEN = '#5ecb6b';
const YEL = '#c9c82b';
const GREY = '#a1a1a1';
const PURP = '#6a66d0';

const curve = (x1, y1, x2, y2) => {
  const dx = Math.abs(x2 - x1) * 0.48;
  return `M${x1} ${y1}C${x1 + dx} ${y1} ${x2 - dx} ${y2} ${x2} ${y2}`;
};

const Link = ({ from, to, c, core }) => {
  const d = curve(from[0], from[1], to[0], to[1]);
  return (
    <>
      <path d={d} fill="none" stroke="rgba(0,0,0,.35)" strokeWidth="6" />
      <path d={d} fill="none" stroke={c} strokeWidth="4.200" />
      {core && <path d={d} fill="none" stroke={core} strokeWidth="1.600" />}
    </>
  );
};

const R = ({ children, out, s, h, mt }) => (
  <NodeRow $end={out} $h={h} $mt={mt}>
    {children}
    {s && <Socket $c={s} $out={out} />}
  </NodeRow>
);

const SelectField = ({ label, ml, mt, h }) => (
  <NodeSelect $ml={ml} $mt={mt} $h={h}>
    {label}
    <Chevron s={13} />
  </NodeSelect>
);

const PlayNode = ({ x, name, object }) => (
  <Node $x={x} $y={326} $w={207} $pb={3}>
    <NodeHead $mb={6}>
      <Chevron s={15} />
      <HeadTitle>Play Tilesheet</HeadTitle>
      <HeadIcon><Clapper s={22} /></HeadIcon>
    </NodeHead>
    <R out s={RED}>Out</R>
    <R out s={RED}>Done</R>
    <R s={RED} mt={4}>In</R>
    <R s={BLUE}>
      {object ? 'Object:' : 'Object'}
      {object && (
        <NodeField $w={117}>
          <ObjectIc s={20} c="#e8e8e8" />
          Plane
          <FieldEnd><Close s={15} /></FieldEnd>
        </NodeField>
      )}
    </R>
    <R s={LBLUE}>
      Name
      <NodeField $w={98} $center={x < 700}>{name}</NodeField>
    </R>
  </Node>
);

const Slider = ({ label, value }) => (
  <NodeRow $h={35.400}>
    <Socket $c={GREY} />
    <NodeSlider>
      <span>{label}</span>
      <span>{value}</span>
    </NodeSlider>
  </NodeRow>
);

const OutlinerItem = ({ d, alt, sel, c, arrowC, open, icon, box, name, w, data, dataBox, dataW, hideEye, check }) => (
  <OutRow $d={d} $alt={alt} $sel={sel} $c={c}>
    <OutArrow $open={open} $c={arrowC} />
    <OutIcon $box={box}>{icon}</OutIcon>
    <OutName $w={w}>{name}</OutName>
    {data && <DataCell $box={dataBox} $w={dataW}>{data}</DataCell>}
    <RowEnd>
      {check && <EndCell><TinyCheck><Svg s={16} c="#222"><path d="M3 8.500L6.500 12 13 4.500" fill="none" stroke="#222" strokeWidth="2.400" /></Svg></TinyCheck></EndCell>}
      <EndCell>{hideEye ? <EyeOff /> : <Eye />}</EndCell>
      <EndCell><CameraEye /></EndCell>
    </RowEnd>
  </OutRow>
);

const PanelTitle = ({ children, open }) => (
  <PanelHead>
    <PanelChevron>{open ? <Chevron s={16} /> : <ChevronR s={16} />}</PanelChevron>
    <span>{children}</span>
    <Grip />
  </PanelHead>
);

const Collapsed = ({ title, mt }) => (
  <Panel $mt={mt}>
    <PanelTitle>{title}</PanelTitle>
  </Panel>
);

const Nav = ({ s = 28, top, extra }) => (
  <NavBar>
    <NavGroup><NavItem><Tool s={s} /></NavItem></NavGroup>
    <NavGroup>
      <NavItem><RenderIc s={s} /></NavItem>
      <NavItem><OutputIc s={s} /></NavItem>
      <NavItem><ViewLayerIc s={s} /></NavItem>
      <NavItem><SceneIc s={s} /></NavItem>
      <NavItem $c="#b9565c"><World s={s} /></NavItem>
    </NavGroup>
    <NavGroup><NavItem><CollectionIc s={s} /></NavItem></NavGroup>
    <NavGroup>
      <NavItem $active={top}><ObjectIc s={s} inner="#e0974f" corner="#c98a4c" /></NavItem>
      <NavItem $c="#5a87d2"><Wrench s={s} /></NavItem>
      {extra}
    </NavGroup>
  </NavBar>
);

const PropsTop = ({ h, bg }) => (
  <PropsHeader $h={h}>
    <Group $h={38}>
      <Btn $w={58} $tone={bg}><PropsIc s={28} /><Chevron s={13} /></Btn>
    </Group>
    <Group $h={38} $ml={51}>
      <Btn $w={230} $tone="dark" $left={8}><Search s={28} /></Btn>
    </Group>
    <Group $h={38} $ml={71}>
      <Btn $w={34} $tone={bg}><Chevron s={15} /></Btn>
    </Group>
  </PropsHeader>
);

const ListFooter = ({ b }) => (
  <ListFoot $b={b}>
    <FootArrow />
    <FootGrip />
  </ListFoot>
);

/* ---------- page ---------- */

const App = () => (
  <Window>
    <GlobalStyle />
    <TitleBar>
      <BlenderLogo s={28} />
      Blender* [C:\HaxeToolkit\armory-tutorial-sourcecode\Tilesheet\ExplosionPacked_b.blend]
      <ImeBadge>
        <WinMin />
        FN
      </ImeBadge>
      <WinMax />
      <WinClose><Close s={26} /></WinClose>
    </TitleBar>

    <TopBar>
      <LogoBox><BlenderLogo s={34} c="#eaeaea" eye="#181818" ring="#181818" /></LogoBox>
      <Menus $ml={20}>
        <span>File</span>
        <span>Edit</span>
        <span>Render</span>
        <span>Window</span>
        <span>Help</span>
      </Menus>
      <Workspaces>
        <span>Layout</span>
        <span>Modeling</span>
      </Workspaces>
      <Group $ml={36}>
        <Btn $w={36} $tone="mid"><Play s={26} /></Btn>
        <Btn $w={41} $tone="mid" $sep><Screen s={27} /></Btn>
        <Btn $w={41} $tone="mid" $sep><Folder s={28} /></Btn>
        <Btn $w={37}><Chevron s={14} /></Btn>
      </Group>
      <Group $ml={11}>
        <Btn $w={61}><SceneIc s={26} /><Chevron s={12} /></Btn>
        <Btn $w={240} $tone="dark" $left={15} $sep>
          Scene
          <Filler />
          <Pin s={26} c="#8a8a8a" />
          &nbsp;
        </Btn>
        <Btn $w={40} $tone="mid"><Copy s={28} /></Btn>
        <Btn $w={40} $tone="dim" $c="#7c7c7c"><Close s={20} /></Btn>
      </Group>
      <Group $ml={10}>
        <Btn $w={60}><ViewLayerIc s={26} /><Chevron s={12} /></Btn>
        <Btn $w={240} $tone="dark" $left={14} $sep>ViewLayer</Btn>
        <Btn $w={40} $tone="mid"><Copy s={28} /></Btn>
        <Btn $w={40} $tone="dim" $c="#7c7c7c"><Close s={20} /></Btn>
      </Group>
    </TopBar>

    <Main>
      <Column>
        <Editor $h={888} $grid={29.600} $gx={5.400} $gy={5.200}>
          <Canvas $ox={2} $oy={112}>
            <StrayLabel>SpritePlayer</StrayLabel>
            <LinkLayer>
              <Link from={[249, 432]} to={[648, 447]} c="#b84a4a" core="#c25656" />
              <Link from={[254, 557]} to={[648, 480]} c="#2689bd" />
              <Link from={[254, 557]} to={[381, 848]} c="#2689bd" />
              <Link from={[254, 557]} to={[935, 773]} c="#a9d4e4" core="#d6e9f0" />
              <Link from={[259, 694]} to={[935, 741]} c="#e6bcbc" core="#f0d8d8" />
              <Link from={[854, 410]} to={[972, 447]} c="#b84a4a" />
              <Link from={[589, 811]} to={[618, 885]} c="#a689ad" />
              <Link from={[826, 848]} to={[935, 806]} c="#d9c3df" core="#f0e8f2" />
            </LinkLayer>

            <Node $x={41} $y={381} $w={207} $pb={5}>
              <NodeHead $mb={5}>
                <Chevron s={15} />
                <HeadTitle>On Init</HeadTitle>
                <HeadIcon><Info s={24} /></HeadIcon>
              </NodeHead>
              <R out s={RED}>Out</R>
            </Node>

            <Node $x={47} $y={506} $w={207} $pb={6}>
              <NodeHead $mb={5}>
                <Chevron s={15} />
                <HeadTitle>Self Object</HeadTitle>
                <HeadIcon><ObjectIc s={22} c="#eee" /></HeadIcon>
              </NodeHead>
              <R out s={BLUE}>Object</R>
            </Node>

            <Node $x={75} $y={642} $w={184} $pb={8}>
              <NodeHead $h={30} $mb={6}>
                <Chevron s={15} />
                <HeadTitle>Keyboard: spa</HeadTitle>
                <HeadIcon $mr={9}><Pencil s={24} /></HeadIcon>
              </NodeHead>
              <R out s={RED}>Out</R>
              <R out s={PINK}>State</R>
              <SelectField label="Started" mt={13} h={29} />
              <SelectField label="space" mt={9} h={28} />
            </Node>

            <Node $x={382} $y={694} $w={207} $pb={2}>
              <NodeHead $mb={6}>
                <Chevron s={15} />
                <HeadTitle>Get Tilesheet Sta</HeadTitle>
                <HeadIcon $mr={8}><Clapper s={24} /></HeadIcon>
              </NodeHead>
              <R out s={LBLUE}>Name</R>
              <R out s={'#138a2b'}>Frame</R>
              <R out s={PINK}>Is Paused</R>
              <R s={BLUE} h={40}>Object</R>
            </Node>

            <PlayNode x={648} name="explosion" />
            <PlayNode x={972} name="bomb" object />

            <Node $x={618} $y={797} $w={207} $pb={5}>
              <NodeHead $mb={5}>
                <Chevron s={15} />
                <HeadTitle>Invert Boolean</HeadTitle>
                <HeadIcon><TreeIc s={22} /></HeadIcon>
              </NodeHead>
              <R out s={PINK}>Bool Out</R>
              <R s={PINK} mt={4}>Bool In</R>
            </Node>

            <Node $x={935} $y={651} $w={311} $sel $pb={6}>
              <NodeHead $h={30} $mb={6}>
                <Chevron s={15} />
                <HeadTitle>Set Tilesheet Paused</HeadTitle>
                <HeadIcon><Clapper s={22} /></HeadIcon>
              </NodeHead>
              <R out s={RED}>Out</R>
              <R s={RED} mt={4}>In</R>
              <R s={BLUE}>Object</R>
              <R s={PINK}>Paused</R>
            </Node>
          </Canvas>

          <EditorHeader $h={50} $pt={5}>
            <Group>
              <Btn $w={58}><Dot /><Chevron s={13} /></Btn>
            </Group>
            <Menus $ml={26} $gap={31}>
              <span>View</span>
              <span>Select</span>
              <span>Add</span>
              <span>Node</span>
            </Menus>
            <Group $ml={48}>
              <Btn $w={61}><Dot /><Chevron s={13} /></Btn>
              <Btn $w={240} $tone="dark" $left={13} $sep>SpritePlayer</Btn>
              <Btn $w={48} $tone="mid">2</Btn>
              <Btn $w={40} $tone="blue"><Shield s={28} c="#fff" check /></Btn>
              <Btn $w={40} $tone="mid" $sep><Copy s={26} /></Btn>
              <Btn $w={38} $tone="mid" $sep><Close s={18} /></Btn>
            </Group>
            <PinSlot><Pin s={26} /></PinSlot>
            <Group $ml={26}>
              <Btn $w={34} $tone="dim" $c="#7d7d7d"><Parent s={28} /></Btn>
            </Group>
            <Group $ml={12}>
              <Btn $w={38} $tone="mid"><Magnet s={26} c="#c4c4c4" /></Btn>
              <Btn $w={62}><SnapGrid s={26} /><Chevron s={12} /></Btn>
            </Group>
            <Group $ml={12}>
              <Btn $w={36} $tone="blue"><Overlay s={28} c="#fff" /></Btn>
              <Btn $w={40}><Chevron s={14} /></Btn>
            </Group>
          </EditorHeader>

          <RegionToggle $top={84}><ChevronR s={20} /></RegionToggle>
          <RegionToggle $top={84} $right><ChevronL s={20} /></RegionToggle>
          <Scroller $x={369} $y={881} $w={474} $h={5} />
          <Scroller $x={1244} $y={60} $w={5} $h={342} />
        </Editor>

        <Editor $h={952} $mt={6} $grid={32} $gx={2} $gy={-1}>
          <Canvas $ox={2} $oy={1006}>
            <LinkLayer>
              <Link from={[441, 1341]} to={[591, 1410]} c="#e6e6a4" core="#f2f2c8" />
              <Link from={[441, 1377]} to={[591, 1445]} c="#c8c8c8" core="#ececec" />
              <Link from={[816, 1286]} to={[988, 1317]} c="#acd8b0" core="#dcefdc" />
            </LinkLayer>

            <Node $x={56} $y={1286} $w={385} $fs={16.600} $pb={6}>
              <NodeHead $h={31} $mb={6} $bg="#79481d" $pl={16} $gap={10}>
                <Chevron s={15} />
                <HeadTitle>Explosion.png</HeadTitle>
              </NodeHead>
              <R out s={YEL} h={36}>Color</R>
              <R out s={GREY} h={36}>Alpha</R>
              <NodeId $mt={16} $h={29}>
                <Btn $w={49} $fs={16}><ImageIc s={26} /><Chevron s={11} /></Btn>
                <Btn $w={133} $tone="dark" $fs={16.600} $left={12}>Explosion.png</Btn>
                <Btn $w={38} $tone="mid" $fs={16.600}>2</Btn>
                <Btn $w={32} $tone="mid" $sep><Shield s={22} c="#aaa" /></Btn>
                <Btn $w={31} $tone="mid" $sep><Copy s={22} /></Btn>
                <Btn $w={33} $tone="mid" $sep><Folder s={24} /></Btn>
                <Btn $w={31} $tone="mid" $sep><Close s={18} /></Btn>
              </NodeId>
              <SelectField label="Linear" mt={10} />
              <SelectField label="Flat" mt={10} />
              <SelectField label="Repeat" mt={10} />
              <SelectField label="Single Image" mt={10} />
              <LabeledSelect>
                <span>Color Space</span>
                <SelectField label="sRGB" ml={0.1} />
              </LabeledSelect>
              <LabeledSelect>
                <span>Alpha</span>
                <SelectField label="Straight" ml={0.1} />
              </LabeledSelect>
              <R s={PURP} h={36} mt={7}>Vector</R>
            </Node>

            <Node $x={592} $y={1229} $w={224} $sel $fs={16.600} $pb={6}>
              <NodeHead $h={33} $mb={6} $bg="#3e5728" $pl={16} $gap={10}>
                <Chevron s={15} />
                <HeadTitle>Armory PBR</HeadTitle>
                <HeadIcon $mr={12}><NodeTreeIc s={24} /></HeadIcon>
              </NodeHead>
              <R out s={GREEN} h={35.400}>Surface</R>
              <R out s={GREY} h={35.400}>Displacement</R>
              <NodeId $mt={15} $h={31}>
                <Btn $w={50} $fs={16}><MaterialIc s={24} c="#e8e8e8" dark="#282828" /><Chevron s={11} /></Btn>
                <Btn $w={70} $tone="dark" $fs={16.600} $left={12}>Arm...</Btn>
                <Btn $w={37} $tone="mid" $fs={16.600}>2</Btn>
                <Btn $w={31} $tone="blue"><Shield s={24} c="#fff" check /></Btn>
              </NodeId>
              <R s={YEL} h={35.400} mt={7}>Base Color</R>
              <R s={GREY} h={35.400}>Opacity</R>
              <Slider label="Occlusion" value="1.000" />
              <Slider label="Roughne" value="0.500" />
              <Slider label="Metallic" value="0.000" />
              <R s={YEL} h={35.400}>Norma...<Swatch /></R>
              <Slider label="Emission" value="0.000" />
              <Slider label="Height" value="0.000" />
              <Slider label="Subsurfa" value="0.000" />
            </Node>

            <Node $x={988} $y={1222} $w={224} $fs={16.600} $pb={8}>
              <NodeHead $h={31} $bg="#3e1f28" $pl={16} $gap={10}>
                <Chevron s={15} />
                <HeadTitle>Material Output</HeadTitle>
              </NodeHead>
              <SelectField label="All" mt={9} />
              <R s={GREEN} h={35.500} mt={7}>Surface</R>
              <R s={GREEN} h={35.500}>Volume</R>
              <R s={PURP} h={35.500}>Displacement</R>
            </Node>
          </Canvas>

          <EditorHeader $h={54} $pt={9} $bg="transparent">
            <Group>
              <Btn $w={58}><SphereIc s={34} /><Chevron s={12} /></Btn>
            </Group>
            <Group $ml={12}>
              <Btn $w={186} $left={10}>
                <ObjectIc s={28} c="#e4e4e4" />
                &nbsp;Object
                <Filler />
                <Chevron s={14} />
                &nbsp;
              </Btn>
            </Group>
            <Menus $ml={18} $gap={32}>
              <span>View</span>
              <span>Select</span>
              <span>Add</span>
              <span>Node</span>
            </Menus>
            <BigCheck $ml={25}><Check s={20} /></BigCheck>
            <HeaderLabel>Use Nodes</HeaderLabel>
            <Group $ml={66}>
              <Btn $w={156} $left={15}>
                Slot 1
                <Filler />
                <Chevron s={14} />
                &nbsp;
              </Btn>
            </Group>
            <Group $ml={14}>
              <Btn $w={61}><MaterialIc s={26} c="#dcdcdc" dark="#282828" /><Chevron s={12} /></Btn>
              <Btn $w={180} $tone="dark" $left={13} $sep>Material</Btn>
            </Group>
          </EditorHeader>

          <Crumbs>
            <ObjectIc s={28} c="#e8e8e8" />
            <CrumbText $ml={18}>Plane</CrumbText>
            <CrumbIcon $ml={29}><ChevronR s={20} /></CrumbIcon>
            <CrumbIcon $ml={14}><Mesh s={30} /></CrumbIcon>
            <CrumbText>Plane</CrumbText>
            <CrumbIcon $ml={30}><ChevronR s={20} /></CrumbIcon>
            <CrumbIcon $ml={16}><MaterialIc s={28} c="#e8e8e8" dark="#1c1c1c" /></CrumbIcon>
            <CrumbText>Material</CrumbText>
          </Crumbs>

          <RegionToggle $top={86}><ChevronR s={20} /></RegionToggle>
          <RegionToggle $top={86} $right><ChevronL s={20} /></RegionToggle>
          <Scroller $x={18} $y={937} $w={1222} $h={5} />
          <Scroller $x={1244} $y={120} $w={5} $h={800} />
        </Editor>
      </Column>

      <Column>
        <Outliner>
          <OutlinerHeader>
            <Group>
              <Btn $w={60}><TreeIc s={28} /><Chevron s={12} /></Btn>
            </Group>
            <Group $ml={11}>
              <Btn $w={60}><ViewLayerIc s={26} /><Chevron s={12} /></Btn>
            </Group>
            <Group $ml={32}>
              <Btn $w={228} $tone="dark" $left={8}><Search s={28} /></Btn>
            </Group>
            <Group $ml={31}>
              <Btn $w={38} $left={5}><Funnel s={30} /></Btn>
            </Group>
          </OutlinerHeader>
          <OutlinerItem d={0} open icon={<CollectionSolid s={28} />} box="#545454" name="Collection" w={220} check />
          <OutlinerItem d={1} alt icon={<Triangle s={30} c="#7c5534" />} arrowC="#707070" name="Cube" c="#7a7a7a" w={98}
            data={<Mesh s={30} c="#1f7a5f" />} hideEye />
          <OutlinerItem d={1} open icon={<EmptyIc s={30} c="#cc8c50" />} name="Empty" w={136} />
          <OutlinerItem d={2} alt icon={<CameraObj s={32} c="#cc8c50" />} name="Camera" w={123}
            data={<CamData s={24} c="#23b38e" />} dataBox="#545454" dataW={19} />
          <OutlinerItem d={1} icon={<Bulb s={30} c="#cc8c50" />} name="Light" w={98}
            data={<LightData s={28} c="#23b38e" />} />
          <OutlinerItem d={1} sel icon={<Triangle s={30} c="#e49a55" />} box="#4a6494" name="Plane" c="#e9ac43" w={98}
            data={<Mesh s={30} c="#23c4a6" />} dataBox="#4a6494" />
          <OutMark $x={57} $y={100} $w={1} $h={186} $bg="#636363" />
          <OutMark $x={17} $y={109} $w={8} $h={8} $bg="#e6e6e6" $r />
          <OutMark $x={97} $y={174} $w={2} $h={22} $bg="#757575" />
          <OutMark $x={5} $y={256}><ModeIc s={28} /></OutMark>
          <OutMark $x={480} $y={93} $w={5} $h={127} $bg="#383838" />
        </Outliner>

        <PropsArea $h={604} $mt={6}>
          <PropsTop h={50} />
          <PropsBody>
            <Nav top />
            <PanelList>
              <Panel $pb={13}>
                <PanelTitle open>Armory Traits</PanelTitle>
                <ListGrid $mt={13}>
                  <ListBox $h={87}>
                    <ListItem $active $h={27} $gap={14} $pl={13}>
                      <CheckBox $on $mr={12}><Check s={15} /></CheckBox>
                      <NodeTreeIc s={21} />
                      SpritePlayer
                      <ShieldBtn><Shield s={22} c="#a8a8a8" /></ShieldBtn>
                    </ListItem>
                    <ListFooter b={5} />
                  </ListBox>
                  <SideButtons>
                    <SideBtn $r="4px 4px 0 0" $h={25}><Plus s={17} /></SideBtn>
                    <SideBtn $r="0 0 4px 4px" $h={28} $mt={2}><Minus s={17} /></SideBtn>
                    <SideBtn $dark $h={25} $mt={17}><Chevron s={15} /></SideBtn>
                  </SideButtons>
                </ListGrid>
                <ActionRow>
                  <ActionBtn $r="4px 0 0 4px"><Plus s={16} />New Tree</ActionBtn>
                  <ActionBtn><NodeTreeIc s={22} />Edit Tree</ActionBtn>
                  <ActionBtn $r="0 4px 4px 0"><Download s={22} />From Editor</ActionBtn>
                </ActionRow>
                <PropRow $mt={12} $lw={154}>
                  <PropLabel>Tree</PropLabel>
                  <FieldDark $h={26} $pl={6} $gap={11}>
                    <NodeTreeIc s={21} />
                    SpritePlayer
                    <FieldEnd><Close s={16} /></FieldEnd>
                  </FieldDark>
                </PropRow>
              </Panel>
              <Panel>
                <PanelTitle open>Armory Props</PanelTitle>
                <CheckRow $mt={10}><CheckBox $on><Check s={15} /></CheckBox>Export</CheckRow>
                <CheckRow><CheckBox $on><Check s={15} /></CheckBox>Spawn</CheckRow>
                <CheckRow><CheckBox />Mobile</CheckRow>
                <CheckRow><CheckBox $on><Check s={15} /></CheckBox>Animation</CheckRow>
                <PropRow $mt={8}>
                  <PropLabel>Instanced Children</PropLabel>
                  <FieldDark>
                    Off
                    <FieldEnd><Chevron s={13} /></FieldEnd>
                  </FieldDark>
                </PropRow>
                <PropRow $mt={18}>
                  <PropLabel>Tilesheet</PropLabel>
                  <FieldDark $pl={11} $gap={16}>
                    <Dot />
                    SpriteAnimation
                    <FieldEnd><Close s={16} /></FieldEnd>
                  </FieldDark>
                </PropRow>
                <PropRow $mt={18}>
                  <PropLabel>Action</PropLabel>
                  <FieldDark $pl={11} $gap={16}>
                    <Dot />
                    bomb
                    <FieldEnd><Close s={16} /></FieldEnd>
                  </FieldDark>
                </PropRow>
              </Panel>
            </PanelList>
          </PropsBody>
        </PropsArea>

        <PropsArea $h={946} $mt={1}>
          <PropsTop h={50} bg="dark" />
          <PropsBody>
            <Nav extra={
              <>
                <NavItem $c="#5a87d2"><Particles s={28} /></NavItem>
                <NavItem $c="#5a87d2"><Physics s={28} /></NavItem>
                <NavItem $c="#5a87d2"><Constraint s={28} /></NavItem>
                <NavItem $c="#23b38e"><Mesh s={28} /></NavItem>
                <NavItem $active><MaterialIc s={28} c="#c8606a" dark="#1d1d1d" /></NavItem>
              </>
            } />
            <PanelList>
              <Collapsed title="Preview" mt={-11} />
              <Collapsed title="Surface" />
              <Collapsed title="Volume" />
              <Collapsed title="Settings" />
              <Collapsed title="Armory Props" />
              <Panel $pb={11}>
                <PanelTitle open>Armory Tilesheet</PanelTitle>
                <ListGrid $mt={14}>
                  <ListBox $h={88} $pt={7}>
                    <ListItem $active $gap={12}>
                      <ObjectIc s={22} c="#f5f5f5" />
                      SpriteAnimation
                    </ListItem>
                    <ListFooter b={10} />
                  </ListBox>
                  <SideButtons>
                    <SideBtn $r="4px 4px 0 0" $h={27}><Plus s={17} /></SideBtn>
                    <SideBtn $r="0 0 4px 4px" $h={28} $mt={2}><Minus s={17} /></SideBtn>
                  </SideButtons>
                </ListGrid>
                <PropRow $mt={10}>
                  <PropLabel>Tiles X</PropLabel>
                  <FieldValue>8</FieldValue>
                </PropRow>
                <PropRow $mt={11}>
                  <PropLabel>Tiles Y</PropLabel>
                  <FieldValue>8</FieldValue>
                </PropRow>
                <PropRow $mt={11}>
                  <PropLabel>Frame Rate</PropLabel>
                  <FieldValue>60.00</FieldValue>
                </PropRow>
                <SectionLabel>Actions</SectionLabel>
                <ListGrid $mt={15}>
                  <ListBox $h={148} $pt={5}>
                    <ListItem $h={30}><ObjectIc s={22} c="#d4d4d4" />bomb</ListItem>
                    <ListItem $h={30}><ObjectIc s={22} c="#d4d4d4" />explosion</ListItem>
                    <ListItem $h={30}><ObjectIc s={22} c="#d4d4d4" />start</ListItem>
                    <ListItem $active $h={26} $mt={4}><ObjectIc s={22} c="#f5f5f5" />finished</ListItem>
                    <ListFooter b={9} />
                  </ListBox>
                  <SideButtons>
                    <SideBtn $r="4px 4px 0 0" $h={26}><Plus s={17} /></SideBtn>
                    <SideBtn $r="0 0 4px 4px" $h={29} $mt={2}><Minus s={17} /></SideBtn>
                    <SideBtn $r="4px 4px 0 0" $h={26} $mt={13}><ArrowUp /></SideBtn>
                    <SideBtn $r="0 0 4px 4px" $h={29} $mt={2}><ArrowUp $down /></SideBtn>
                  </SideButtons>
                </ListGrid>
                <PropRow $mt={11}>
                  <PropLabel>Start</PropLabel>
                  <FieldValue>40</FieldValue>
                </PropRow>
                <PropRow $mt={11}>
                  <PropLabel>End</PropLabel>
                  <FieldValue>64</FieldValue>
                </PropRow>
                <CheckRow $mt={7}><CheckBox $on><Check s={15} /></CheckBox>Loop</CheckRow>
              </Panel>
              <Collapsed title="Line Art" />
              <Collapsed title="Viewport Display" />
              <Collapsed title="Custom Properties" />
            </PanelList>
          </PropsBody>
        </PropsArea>
      </Column>
    </Main>

    <StatusBar>
      <MouseCell><MouseIc s={30} side="l" /></MouseCell>
      <MouseCell><MouseIc s={30} side="m" /></MouseCell>
      <MouseCell><MouseIc s={30} side="r" /></MouseCell>
      <Version>3.3.5</Version>
    </StatusBar>
  </Window>
);

export default App;
